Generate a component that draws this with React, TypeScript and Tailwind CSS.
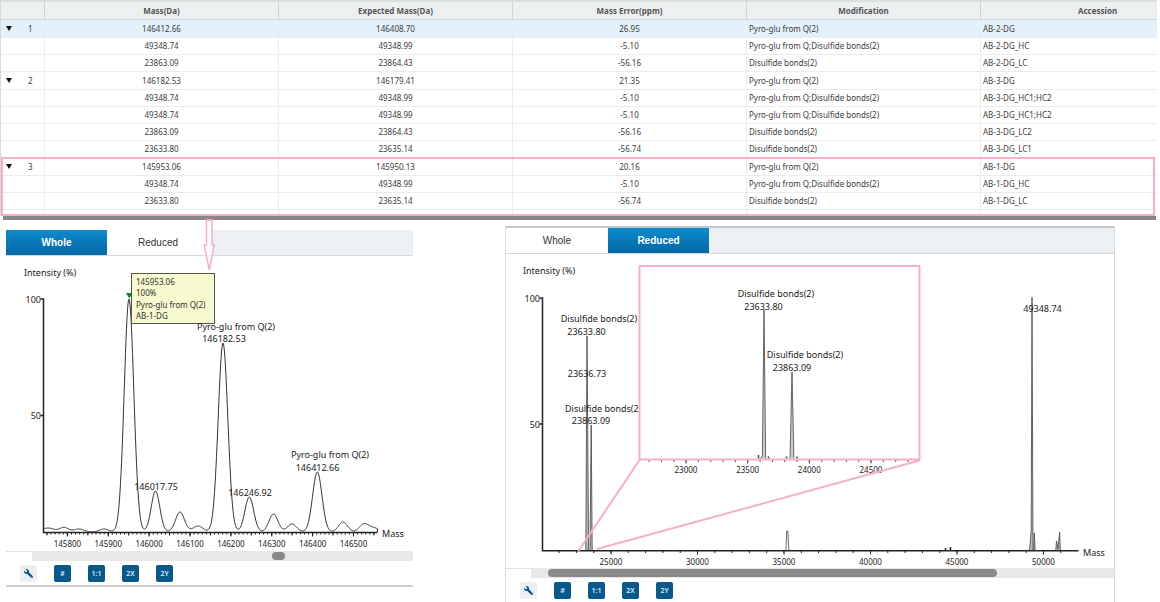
import { useState } from "react";
import type { ReactNode } from "react";
import { FaWrench } from "react-icons/fa";

type Row = {
  id?: number;
  cells: [string, string, string, string, string];
};

const HEADERS = ["Mass(Da)", "Expected Mass(Da)", "Mass Error(ppm)", "Modification", "Accession"];

const ROWS: Row[] = [
  { id: 1, cells: ["146412.66", "146408.70", "26.95", "Pyro-glu from Q(2)", "AB-2-DG"] },
  { cells: ["49348.74", "49348.99", "-5.10", "Pyro-glu from Q;Disulfide bonds(2)", "AB-2-DG_HC"] },
  { cells: ["23863.09", "23864.43", "-56.16", "Disulfide bonds(2)", "AB-2-DG_LC"] },
  { id: 2, cells: ["146182.53", "146179.41", "21.35", "Pyro-glu from Q(2)", "AB-3-DG"] },
  { cells: ["49348.74", "49348.99", "-5.10", "Pyro-glu from Q;Disulfide bonds(2)", "AB-3-DG_HC1;HC2"] },
  { cells: ["49348.74", "49348.99", "-5.10", "Pyro-glu from Q;Disulfide bonds(2)", "AB-3-DG_HC1;HC2"] },
  { cells: ["23863.09", "23864.43", "-56.16", "Disulfide bonds(2)", "AB-3-DG_LC2"] },
  { cells: ["23633.80", "23635.14", "-56.74", "Disulfide bonds(2)", "AB-3-DG_LC1"] },
  { id: 3, cells: ["145953.06", "145950.13", "20.16", "Pyro-glu from Q(2)", "AB-1-DG"] },
  { cells: ["49348.74", "49348.99", "-5.10", "Pyro-glu from Q;Disulfide bonds(2)", "AB-1-DG_HC"] },
  { cells: ["23633.80", "23635.14", "-56.74", "Disulfide bonds(2)", "AB-1-DG_LC"] },
];

function MassTable() {
  return (
    <div className="relative mr-[3px] overflow-hidden border-l border-[#d8d8d8]">
      <table className="w-[calc(100%+58px)] table-fixed border-separate border-spacing-0 text-[8px] leading-[16px] text-[#3c3c3c]">
        <colgroup>
          <col className="w-11" />
          <col />
          <col />
          <col />
          <col />
          <col />
        </colgroup>
        <thead>
          <tr className="h-5 bg-[#edf0f1] text-[#555]">
            <td className="border-t-2 border-r border-b border-t-[#dedede] border-r-[#cfd3d4] border-b-[#d5d8d9] p-0" />
            {HEADERS.map((h) => (
              <th
                key={h}
                className="border-t-2 border-r border-b border-t-[#dedede] border-r-[#cfd3d4] border-b-[#d5d8d9] p-0 text-center font-bold"
              >
                {h}
              </th>
            ))}
          </tr>
        </thead>
        <tbody>
          {ROWS.map((row, i) => (
            <tr key={i} className={i === 0 ? "h-[18px] bg-[#e4f1fa]" : row.id ? "h-[18px]" : "h-[17px]"}>
              <td className="border-r border-b border-[#ececec] p-0">
                {row.id && (
                  <div className="flex items-center pl-[5px]">
                    <button type="button" aria-label="Collapse group" className="flex w-1.5">
                      <svg viewBox="0 0 6 5" className="h-[5px] w-1.5" aria-hidden="true">
                        <path d="M0 0h6L3 5z" fill="#111" />
                      </svg>
                    </button>
                    <span className="ml-4">{row.id}</span>
                  </div>
                )}
              </td>
              {row.cells.map((c, j) => (
                <td
                  key={j}
                  className={
                    j < 3
                      ? "border-r border-b border-[#ececec] p-0 text-center"
                      : "border-r border-b border-[#ececec] p-0 pl-0.5"
                  }
                >
                  {c}
                </td>
              ))}
            </tr>
          ))}
          <tr className="h-1.5" aria-hidden="true">
            {[0, 1, 2, 3, 4, 5].map((n) => (
              <td key={n} className="border-r border-[#ececec] p-0" />
            ))}
          </tr>
        </tbody>
      </table>
      <div className="pointer-events-none absolute right-[2px] bottom-0 left-0 h-[59px] border-2 border-[#f5b0c8]" />
    </div>
  );
}

function Tabs({ initial }: { initial: string }) {
  const [active, setActive] = useState(initial);
  return (
    <div role="tablist" className="flex h-[26px] border-b border-[#d3d8db] bg-[#edf0f2] font-['Liberation_Sans',Arial,sans-serif] text-[10px]">
      {["Whole", "Reduced"].map((t) => (
        <button
          key={t}
          type="button"
          role="tab"
          aria-selected={t === active}
          onClick={() => setActive(t)}
          className={
            t === active
              ? "w-[101px] bg-linear-to-b from-[#0c8bce] to-[#0767a5] font-bold text-white"
              : "w-[102px] bg-white text-[#333]"
          }
        >
          {t}
        </button>
      ))}
    </div>
  );
}

function Toolbar() {
  return (
    <div className="flex gap-[17px] pl-3.5">
      <button type="button" aria-label="Settings" className="flex size-[17px] items-center justify-center rounded-[2px] bg-[#eceff4] text-[#0a5488]">
        <FaWrench className="size-[9px] -scale-x-100" />
      </button>
      {["#", "1:1", "2X", "2Y"].map((b) => (
        <button
          key={b}
          type="button"
          className="flex size-[17px] items-center justify-center rounded-[2px] bg-[#07598c] text-[7px] leading-none font-semibold text-[#dcebf5]"
        >
          {b}
        </button>
      ))}
    </div>
  );
}

function Label({ x, y, anchor, children }: { x: number; y: number; anchor?: "middle" | "end"; children: ReactNode }) {
  return (
    <text x={x} y={y} textAnchor={anchor ?? "start"}>
      {children}
    </text>
  );
}

// [centre, height, sigma] of every peak in the deconvoluted spectrum
const PEAKS: [number, number, number][] = [
  [48, 4, 6],
  [64, 4.5, 4.5],
  [79, 3, 5],
  [104, 3, 4.5],
  [129, 233, 4.8],
  [155.5, 41, 4.3],
  [180, 20, 4.5],
  [198, 6, 5],
  [223, 189, 4.8],
  [249.3, 35, 4.4],
  [273.5, 18, 4.5],
  [292, 8, 4.6],
  [317.3, 60, 4.7],
  [343, 10, 4.5],
  [364, 8, 4.5],
  [374, 4, 5],
];

function wholeTrace(): string {
  const points: string[] = [];
  for (let x = 43.5; x <= 377.5; x += 0.5) {
    const h = PEAKS.reduce((s, [c, a, w]) => s + a * Math.exp(-((x - c) ** 2) / (2 * w * w)), 0);
    points.push(`${x} ${(532 - h).toFixed(2)}`);
  }
  return `M${points.join("L")}V532`;
}

const WHOLE_TRACE = wholeTrace();

function ticks(start: number, end: number, step: number, y: number, length: number): string {
  let d = "";
  for (let x = start; x <= end; x += step) d += `M${x.toFixed(2)} ${y}v${length}`;
  return d;
}

function WholeChart() {
  return (
    <svg viewBox="6 256 407 295" className="block w-full" role="img" aria-label="Whole mass spectrum">
      <g fill="none" stroke="#222">
        <path d="M40.5 299H43.5V532.5H377.5M40.5 415.5H43.5" strokeWidth="1.5" />
        <path d={ticks(46.96, 377, 4.087, 533, 1.5)} strokeWidth="1" />
        <path d={ticks(46.96, 377, 20.435, 533, 2.5)} strokeWidth="1" />
        <path d={ticks(67.4, 377, 40.87, 533, 3.5)} strokeWidth="1" />
        <path d={WHOLE_TRACE} stroke="#333" strokeWidth="1" />
      </g>
      <g fontSize="9" fill="#222">
        <Label x={24} y={275.5}>Intensity (%)</Label>
        <Label x={41} y={302.5} anchor="end">100</Label>
        <Label x={41} y={419} anchor="end">50</Label>
        <Label x={382} y={537}>Mass</Label>
        <Label x={156} y={489.5} anchor="middle">146017.75</Label>
        <Label x={250} y={496} anchor="middle">146246.92</Label>
        <Label x={330} y={458} anchor="middle">Pyro-glu from Q(2)</Label>
        <Label x={317.5} y={471} anchor="middle">146412.66</Label>
      </g>
      <g fontSize="8" fill="#222">
        {[145800, 145900, 146000, 146100, 146200, 146300, 146400, 146500].map((m, i) => (
          <Label key={m} x={67.4 + i * 40.87} y={546.5} anchor="middle">{m}</Label>
        ))}
      </g>
      <path d="M126 293h6.5l-3.2 5.5z" fill="#0b8a1e" />
      <rect x="131.5" y="273.5" width="83" height="50" fill="#f7f9cf" stroke="#55564a" />
      <g fontSize="8" fill="#333">
        <Label x={136} y={284.5}>145953.06</Label>
        <Label x={136} y={296}>100%</Label>
        <Label x={136} y={307.5}>Pyro-glu from Q(2)</Label>
        <Label x={136} y={319}>AB-1-DG</Label>
      </g>
      <g fontSize="9" fill="#222">
        <Label x={236} y={330} anchor="middle">Pyro-glu from Q(2)</Label>
        <Label x={224} y={342} anchor="middle">146182.53</Label>
      </g>
    </svg>
  );
}

function ReducedChart() {
  return (
    <svg viewBox="506 254 608 314" className="block w-full" role="img" aria-label="Reduced mass spectrum">
      <g fill="none" stroke="#222">
        <path d="M539.5 298H542.5V550.8H1078.5M539.5 424H542.5" strokeWidth="1.5" />
        <path d={ticks(559.1, 1078, 17.3, 551, 2)} strokeWidth="1" />
        <path d={ticks(611, 1078, 86.5, 551, 3.5)} strokeWidth="1" />
        <g stroke="#444" strokeWidth="0.8" fill="#bbb">
          <path d="M585.8 550L587 336L588.6 550" />
          <path d="M590 550L591.2 425L592.2 550" />
          <path d="M785.9 550L786.8 531H787.8L788.8 550" fill="#fff" />
          <path d="M1029.6 550L1031.2 530L1032 297.5L1033 550" />
          <path d="M1033.6 550L1034.3 533L1035.2 550" />
          <path d="M1055.8 550L1056.5 541L1058 549L1059.6 532L1060.4 550" />
        </g>
        <path d="M945.5 550v-2M950.5 550v-3" strokeWidth="1.5" />
      </g>
      <g fontSize="9" fill="#222">
        <Label x={523} y={273.5}>Intensity (%)</Label>
        <Label x={540} y={301.5} anchor="end">100</Label>
        <Label x={540} y={427.5} anchor="end">50</Label>
        <Label x={1083} y={555.5}>Mass</Label>
        <Label x={599} y={322} anchor="middle">Disulfide bonds(2)</Label>
        <Label x={586.5} y={335} anchor="middle">23633.80</Label>
        <Label x={587} y={377} anchor="middle">23636.73</Label>
        <Label x={565} y={411.5}>Disulfide bonds(2</Label>
        <Label x={591} y={424} anchor="middle">23863.09</Label>
        <Label x={1042.5} y={312} anchor="middle">49348.74</Label>
      </g>
      <g fontSize="8" fill="#222">
        {[25000, 30000, 35000, 40000, 45000, 50000].map((m, i) => (
          <Label key={m} x={611 + i * 86.5} y={564.5} anchor="middle">{m}</Label>
        ))}
      </g>

      <rect x="639.5" y="266" width="280" height="193.5" fill="#fff" />
      <g stroke="#444">
        <path d="M760.5 458.5L762.4 456L764 310L765.7 458.5" fill="#ccc" strokeWidth="0.8" />
        <path d="M790 458.5L792 372L793.9 458.5" fill="#ccc" strokeWidth="0.8" />
        <path d="M758.5 458.5v-3.5M768.5 458.5v-2M786.5 458.5v-2M797 458.5v-2" strokeWidth="1.5" />
        <path d={ticks(649.1, 915, 12.33, 460, 2)} />
        <path d={ticks(686, 915, 61.65, 460, 3.5)} />
      </g>
      <g fontSize="9" fill="#222">
        <Label x={776} y={297} anchor="middle">Disulfide bonds(2)</Label>
        <Label x={763.5} y={309.5} anchor="middle">23633.80</Label>
        <Label x={805} y={358} anchor="middle">Disulfide bonds(2)</Label>
        <Label x={792} y={371} anchor="middle">23863.09</Label>
      </g>
      <g fontSize="8" fill="#222">
        {[23000, 23500, 24000, 24500].map((m, i) => (
          <Label key={m} x={686 + i * 61.65} y={473} anchor="middle">{m}</Label>
        ))}
      </g>
      <path
        d="M639.5 266H919.5V459.5H639.5ZM639.5 460L578.5 551M919.5 460.5L597 549"
        fill="none"
        stroke="#f5b0c8"
        strokeWidth="2"
        strokeLinejoin="round"
      />
    </svg>
  );
}

export default function App() {
  return (
    <main className="overflow-hidden bg-white font-['Noto_Sans','Open_Sans',sans-serif]">
      <MassTable />
      <div className="mr-1 ml-[3px] h-1 bg-[#8a8688]" />
      <div className="grid grid-cols-[407fr_610fr] items-start gap-[92px] pt-1.5 pr-[45px] pl-1.5">
        <section className="relative border-b-2 border-[#cfcfcf] pt-1 pb-[3px]">
          <Tabs initial="Whole" />
          <WholeChart />
          <div className="flex h-2.5">
            <div className="w-[26px] border-t border-[#e2e2e2]" />
            <div className="flex grow items-center bg-[#e8e8e8]">
              <div className="ml-[63%] h-2 w-[13px] rounded-full bg-[#888]" />
            </div>
          </div>
          <div className="pt-1">
            <Toolbar />
          </div>
          <svg viewBox="0 0 12 53" className="pointer-events-none absolute -top-[7px] left-[197px] h-[53px] w-3" aria-hidden="true">
            <path d="M3.5 1V26H1.2L6.3 51L11.2 26H9V1Z" fill="#fff" fillOpacity="0.7" stroke="#f5b0c8" strokeWidth="1.5" />
          </svg>
        </section>
        <section className="border-x border-t-2 border-x-[#d6dadd] border-t-[#c4c8ca] pb-1">
          <Tabs initial="Reduced" />
          <ReducedChart />
          <div className="flex h-2.5">
            <div className="w-[25px] border-t border-[#e2e2e2]" />
            <div className="flex grow items-center bg-[#e8e8e8]">
              <div className="ml-[3%] h-2 w-[77%] rounded-full bg-[#8a8a8a]" />
            </div>
          </div>
          <div className="pt-1">
            <Toolbar />
          </div>
        </section>
      </div>
    </main>
  );
}
